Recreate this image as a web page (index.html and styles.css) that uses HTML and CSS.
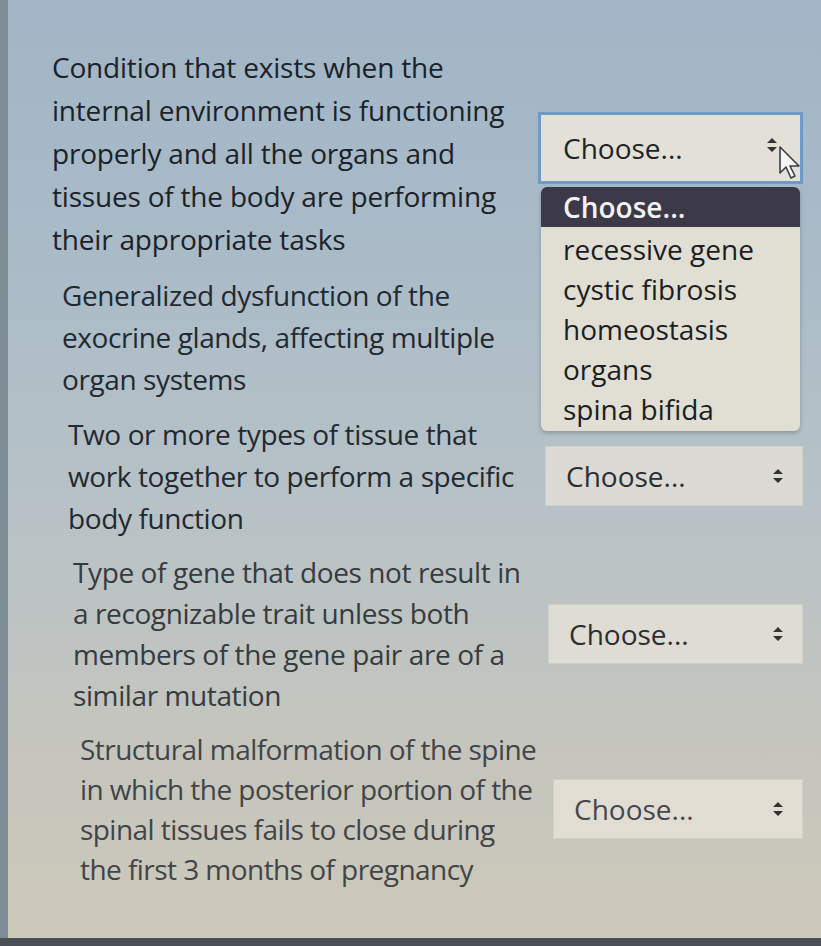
FILE: index.html
```html
<!DOCTYPE html>
<html>
<head>
<meta charset="utf-8">
<link rel="stylesheet" href="styles.css">
</head>
<body>
<div class="screen">
  <div class="quiz">
    <div class="row r1">
      <div class="q">Condition that exists when the<br>internal environment is functioning<br>properly and all the organs and<br>tissues of the body are performing<br>their appropriate tasks</div>
      <div class="sel focused">
        <span>Choose...</span>
        <svg class="arr" width="12" height="16" viewBox="0 0 12 16"><path d="M6 1 L11 6 H1 Z M6 15 L11 10 H1 Z" fill="#333"/></svg>
        <svg class="cursor" width="28" height="36" viewBox="0 0 28 36"><path d="M2 2 L2 28 L8 22 L13 33 L17 31 L12 21 L21 21 Z" fill="#f4f4f2" stroke="#3a3f45" stroke-width="1.6" stroke-linejoin="round"/></svg>
        <div class="menu">
          <div class="opt head">Choose...</div>
          <div class="opt">recessive gene</div>
          <div class="opt">cystic fibrosis</div>
          <div class="opt">homeostasis</div>
          <div class="opt">organs</div>
          <div class="opt">spina bifida</div>
        </div>
      </div>
    </div>
    <div class="row r2">
      <div class="q">Generalized dysfunction of the<br>exocrine glands, affecting multiple<br>organ systems</div>
      <div class="sel hidden"></div>
    </div>
    <div class="row r3">
      <div class="q">Two or more types of tissue that<br>work together to perform a specific<br>body function</div>
      <div class="sel">
        <span>Choose...</span>
        <svg class="arr" width="12" height="16" viewBox="0 0 12 16"><path d="M6 1 L11 6 H1 Z M6 15 L11 10 H1 Z" fill="#333"/></svg>
      </div>
    </div>
    <div class="row r4">
      <div class="q">Type of gene that does not result in<br>a recognizable trait unless both<br>members of the gene pair are of a<br>similar mutation</div>
      <div class="sel">
        <span>Choose...</span>
        <svg class="arr" width="12" height="16" viewBox="0 0 12 16"><path d="M6 1 L11 6 H1 Z M6 15 L11 10 H1 Z" fill="#333"/></svg>
      </div>
    </div>
    <div class="row r5">
      <div class="q">Structural malformation of the spine<br>in which the posterior portion of the<br>spinal tissues fails to close during<br>the first 3 months of pregnancy</div>
      <div class="sel">
        <span>Choose...</span>
        <svg class="arr" width="12" height="16" viewBox="0 0 12 16"><path d="M6 1 L11 6 H1 Z M6 15 L11 10 H1 Z" fill="#333"/></svg>
      </div>
    </div>
  </div>
</div>
</body>
</html>
```
FILE: styles.css
```css
html, body {
  margin: 0;
  padding: 0;
}
body {
  width: 821px;
  height: 946px;
  overflow: hidden;
  background: #4a4f55;
  font-family: "Open Sans", "DejaVu Sans", sans-serif;
}
.screen {
  height: 938px;
  margin-left: 8px;
  background: linear-gradient(180deg, #a1b5c6 0%, #abbcc8 30%, #b8c2c6 55%, #c5c5bd 80%, #cdc9ba 100%);
  box-shadow: -8px 0 0 #7f8d96;
  overflow: hidden;
}
.quiz {
  padding-top: 46px;
  display: flex;
  flex-direction: column;
  gap: 13px;
}
.row {
  display: grid;
  grid-template-columns: 478px 1fr;
  align-items: center;
  margin-right: 18px;
}
.r1 { margin-left: 44px; grid-template-columns: 486px 1fr; }
.r2 { margin-left: 54px; }
.r3 { margin-left: 60px; grid-template-columns: 477px 1fr; }
.r4 { margin-left: 65px; grid-template-columns: 475px 1fr; }
.r5 { margin-left: 72px; grid-template-columns: 473px 1fr; }
.q {
  font-size: 28px;
  line-height: 42px;
  color: #232930;
  letter-spacing: -0.4px;
  white-space: nowrap;
}
.r1 .q { line-height: 43px; color: #1c2229; letter-spacing: -0.2px; }
.r4 .q { color: #363b3f; line-height: 41px; }
.r5 .q { color: #414548; line-height: 40px; letter-spacing: -0.55px; }
.sel {
  position: relative;
  height: 60px;
  background: #dcdcd5;
  border: 1px solid #cfd0ca;
  display: flex;
  align-items: center;
  padding: 0 18px 0 20px;
  font-size: 28px;
  color: #2a2e33;
  box-sizing: border-box;
}
.r3 .sel { background: #dbdad4; }
.r4 .sel { background: #dfdcd3; }
.r5 .sel { background: #e1ddd3; color: #45484b; }
.sel span { flex: 1; }
.sel.hidden { visibility: hidden; }
.sel.focused {
  height: 72px;
  margin-bottom: 12px;
  background: #e2e0d7;
  border: 3px solid #6f9ac3;
  box-shadow: 0 0 0 1px #9fb8cf;
  padding-left: 22px;
  color: #1e2328;
}
.arr { flex: none; }
.focused .arr { margin-right: 4px; margin-top: -6px; }
.cursor {
  position: absolute;
  right: -6px;
  top: 30px;
}
.menu {
  position: absolute;
  left: 0;
  right: 0;
  top: 72px;
  background: #e1ded3;
  border-radius: 6px;
  box-shadow: 0 2px 4px rgba(60, 70, 80, 0.35);
  padding-bottom: 2px;
  overflow: hidden;
  z-index: 2;
}
.opt {
  font-size: 28px;
  line-height: 40px;
  padding-left: 22px;
  color: #1a1e24;
}
.head {
  background: #3c3949;
  color: #f2f2f2;
  font-weight: 600;
  margin-bottom: 2px;
}
```
